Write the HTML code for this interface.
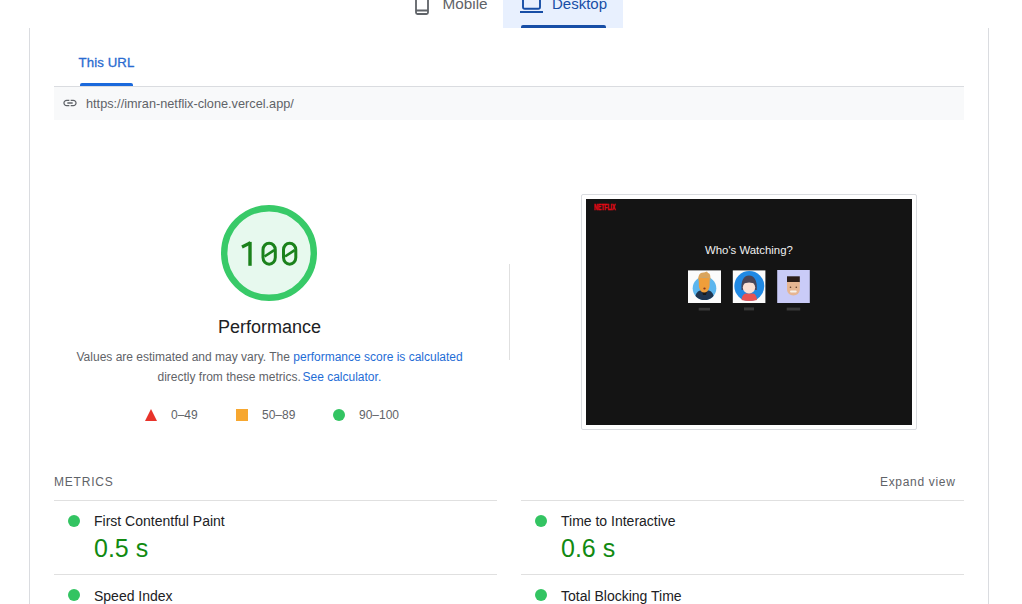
<!DOCTYPE html>
<html><head><meta charset="utf-8">
<style>
*{margin:0;padding:0;box-sizing:border-box}
html,body{width:1022px;height:604px;overflow:hidden;background:#fff;font-family:"Liberation Sans",sans-serif;color:#202124}
.abs{position:absolute}
.t{position:absolute;white-space:nowrap;line-height:1}
</style></head><body>
<!-- top device tabs -->
<div class="abs" style="left:503px;top:0;width:120px;height:28px;background:#e8f0fe"></div>
<div class="abs" style="left:521px;top:25px;width:85px;height:3px;background:#174ea6;border-radius:2px 2px 0 0"></div>
<svg class="abs" style="left:413px;top:0" width="18" height="16" viewBox="0 0 18 16"><path d="M3 -2 V12.5 Q3 14 4.5 14 H13.5 Q15 14 15 12.5 V-2 M3 10.5 H15" fill="none" stroke="#5f6368" stroke-width="1.8"/></svg>
<div class="t" style="left:442.5px;top:-4px;font-size:15.3px;color:#5f6368">Mobile</div>
<svg class="abs" style="left:519px;top:0" width="25" height="14" viewBox="0 0 25 14"><path d="M4 -2 V7 Q4 8.8 5.8 8.8 H19.2 Q21 8.8 21 7 V-2" fill="none" stroke="#174ea6" stroke-width="1.9"/><rect x="1" y="11" width="23" height="2" fill="#174ea6"/></svg>
<div class="t" style="left:552px;top:-4px;font-size:15px;color:#174ea6">Desktop</div>

<!-- card -->
<div class="abs" style="left:29px;top:28px;width:960px;height:600px;border:1px solid #dadce0;border-bottom:none;border-top:none"></div>

<!-- This URL tab -->
<div class="t" style="left:78.5px;top:55.6px;font-size:13.2px;letter-spacing:0.12px;-webkit-text-stroke:0.3px #2a6bd0;color:#2a6bd0">This URL</div>
<div class="abs" style="left:80px;top:83px;width:53px;height:3px;background:#1a69dc;border-radius:2px 2px 0 0"></div>
<div class="abs" style="left:54px;top:86px;width:910px;height:1px;background:#dadce0"></div>
<div class="abs" style="left:54px;top:87px;width:910px;height:33px;background:#f8f9fa"></div>
<svg class="abs" style="left:62px;top:95px" width="16" height="16" viewBox="0 0 24 24"><path fill="#5f6368" d="M3.9 12c0-1.71 1.39-3.1 3.1-3.1h4V7H7c-2.76 0-5 2.240-5 5s2.24 5 5 5h4v-1.9H7c-1.71 0-3.1-1.39-3.1-3.1zM8 13h8v-2H8v2zm9-6h-4v1.9h4c1.71 0 3.1 1.39 3.1 3.1s-1.390 3.1-3.1 3.1h-4V17h4c2.76 0 5-2.24 5-5s-2.24-5-5-5z"/></svg>
<div class="t" style="left:86px;top:98px;font-size:12.72px;color:#5f6368">https://imran-netflix-clone.vercel.app/</div>

<!-- gauge -->
<svg class="abs" style="left:221px;top:205px" width="96" height="96" viewBox="0 0 96 96">
  <circle cx="48" cy="48" r="44.8" fill="#e7f9ee" stroke="#38ca68" stroke-width="6.4"/>
</svg>
<svg class="abs" style="left:238px;top:236px" width="64" height="34" viewBox="0 0 64 34" fill="none" stroke="#1b821b">
  <path d="M12 5.9 V29.8" stroke-width="3.4"/>
  <path d="M4 11 L12.5 6.8" stroke-width="3.2"/>
  <rect x="25" y="7.2" width="12.3" height="21" rx="6.15" ry="6.6" stroke-width="3.0"/>
  <path d="M26.5 20.5 L36.2 14.2" stroke-width="2.6"/>
  <rect x="45.5" y="7.2" width="12.3" height="21" rx="6.15" ry="6.6" stroke-width="3.0"/>
  <path d="M47 20.5 L56.7 14.2" stroke-width="2.6"/>
</svg>
<div class="t" style="left:218px;top:318.4px;font-size:18px;color:#202124">Performance</div>
<div class="t" style="left:76.5px;top:351px;font-size:12px;color:#5f6368">Values are estimated and may vary. The <span style="color:#1f6dd6">performance score is calculated</span></div>
<div class="t" style="left:157.5px;top:371px;font-size:12px;color:#5f6368">directly from these metrics.</div>
<div class="t" style="left:302.5px;top:371px;font-size:12px;color:#1f6dd6">See calculator.</div>
<!-- legend -->
<svg class="abs" style="left:145px;top:409px" width="12" height="12" viewBox="0 0 12 12"><path d="M6 0 L12 12 H0 Z" fill="#e8332a"/></svg>
<div class="t" style="left:171px;top:409px;font-size:12px;color:#5f6368">0–49</div>
<div class="abs" style="left:236px;top:409px;width:12px;height:12px;background:#f7a72f"></div>
<div class="t" style="left:262px;top:409px;font-size:12px;color:#5f6368">50–89</div>
<div class="abs" style="left:333px;top:409px;width:12px;height:12px;border-radius:50%;background:#33c462"></div>
<div class="t" style="left:359px;top:409px;font-size:12px;color:#5f6368">90–100</div>

<!-- divider -->
<div class="abs" style="left:509px;top:264px;width:1px;height:96px;background:#e0e0e0"></div>

<!-- screenshot -->
<div class="abs" style="left:581px;top:194px;width:336px;height:236px;border:1px solid #dadce0;border-radius:2px;background:#fff"></div>
<div class="abs" style="left:586px;top:199px;width:326px;height:226px;background:#141414"></div>
<div class="t" style="left:594px;top:203.5px;font-size:8.2px;font-weight:bold;color:#e50914;-webkit-text-stroke:0.4px #e50914;transform:scaleX(0.63);transform-origin:0 0">NETFLIX</div>
<div class="t" style="left:705px;top:245px;font-size:11.4px;color:#f0f0f0">Who's Watching?</div>
<svg class="abs" style="left:680px;top:266px" width="140" height="50" viewBox="680 266 140 50">
  <!-- avatar 1 -->
  <rect x="688" y="270.4" width="33" height="32.6" fill="#fbfbfb"/>
  <circle cx="704.5" cy="288.3" r="11.8" fill="#5cb6ee"/>
  <defs><clipPath id="c1"><circle cx="704.5" cy="288.3" r="11.8"/></clipPath></defs>
  <path clip-path="url(#c1)" d="M694 302 Q695 292 700 290.5 L709 290.5 Q714 292 715 302 Z" fill="#1f3550"/>
  <path d="M702 291 L707 291 L706 295 L703 295 Z" fill="#1a1a1a"/>
  <path d="M698.6 277.5 L709.8 277.5 L709.5 287 Q708 292.5 704.2 292.5 Q700.3 292.5 699 287 Z" fill="#ef9e3a"/>
  <path d="M698.3 281 Q697.5 272 704 272.5 L707 271.5 L708 273 Q711 273 710.3 281 L709.5 278.5 Q704 276.5 699 278.5 Z" fill="#d9a45c"/>
  <ellipse cx="704.5" cy="288.5" rx="1.2" ry="1" fill="#8a3a20"/>
  <!-- avatar 2 -->
  <rect x="732.8" y="270.4" width="32.6" height="32.6" fill="#fbfbfb"/>
  <circle cx="749.3" cy="286.1" r="15" fill="#2089e4"/>
  <path d="M741.5 300 Q742 294 746 293.5 L753 293.5 Q756.5 294 757 300 Q749.3 302 741.5 300 Z" fill="#e65454"/>
  <path d="M741.5 290 Q740.5 276 749 275.5 Q757.5 276 756.8 290 Z" fill="#4a4658"/>
  <ellipse cx="749" cy="287.5" rx="6.2" ry="6" fill="#fbe0d4"/>
  <path d="M742.5 284 Q743 278 749 278 Q755.5 278 756 284 Q749 281 742.5 284 Z" fill="#4a4658"/>
  <!-- avatar 3 -->
  <rect x="777.2" y="270" width="32.6" height="33" fill="#c9cbf7"/>
  <rect x="787" y="276.3" width="12.8" height="6" fill="#2b1d18"/>
  <path d="M787 282 L799.8 282 L799.8 290 Q799 295.4 793.4 295.4 Q787.8 295.4 787 290 Z" fill="#e6b592"/>
  <rect x="790" y="290.6" width="6.7" height="2" rx="1" fill="#f6f2ea"/>
  <circle cx="790.5" cy="287.3" r="0.8" fill="#5a3a2a"/>
  <circle cx="796.3" cy="287.3" r="0.8" fill="#5a3a2a"/>
  <!-- names -->
  <rect x="698.7" y="307.8" width="11.3" height="2.7" fill="#383838"/>
  <rect x="744" y="307.4" width="10" height="3" fill="#383838"/>
  <rect x="786.7" y="307.6" width="13.5" height="2.9" fill="#383838"/>
</svg>

<!-- metrics -->
<div class="t" style="left:54px;top:476px;font-size:12px;letter-spacing:0.8px;color:#5f6368">METRICS</div>
<div class="t" style="left:880px;top:476px;font-size:12px;letter-spacing:0.68px;color:#5f6368">Expand view</div>
<div class="abs" style="left:54px;top:500px;width:443px;height:1px;background:#e0e0e0"></div>
<div class="abs" style="left:521px;top:500px;width:443px;height:1px;background:#e0e0e0"></div>
<div class="abs" style="left:54px;top:574px;width:443px;height:1px;background:#e0e0e0"></div>
<div class="abs" style="left:521px;top:574px;width:443px;height:1px;background:#e0e0e0"></div>

<div class="abs" style="left:68px;top:515px;width:12px;height:12px;border-radius:50%;background:#33c462"></div>
<div class="t" style="left:94px;top:514px;font-size:14px;color:#202124">First Contentful Paint</div>
<div class="t" style="left:94px;top:536px;font-size:25px;color:#118a11">0.5 s</div>
<div class="abs" style="left:535px;top:515px;width:12px;height:12px;border-radius:50%;background:#33c462"></div>
<div class="t" style="left:561px;top:514px;font-size:14px;color:#202124">Time to Interactive</div>
<div class="t" style="left:561px;top:536px;font-size:25px;color:#118a11">0.6 s</div>

<div class="abs" style="left:68px;top:589px;width:12px;height:12px;border-radius:50%;background:#33c462"></div>
<div class="t" style="left:94px;top:588.5px;font-size:14px;color:#202124">Speed Index</div>
<div class="abs" style="left:535px;top:589px;width:12px;height:12px;border-radius:50%;background:#33c462"></div>
<div class="t" style="left:561px;top:588.5px;font-size:14px;color:#202124">Total Blocking Time</div>
</body></html>
